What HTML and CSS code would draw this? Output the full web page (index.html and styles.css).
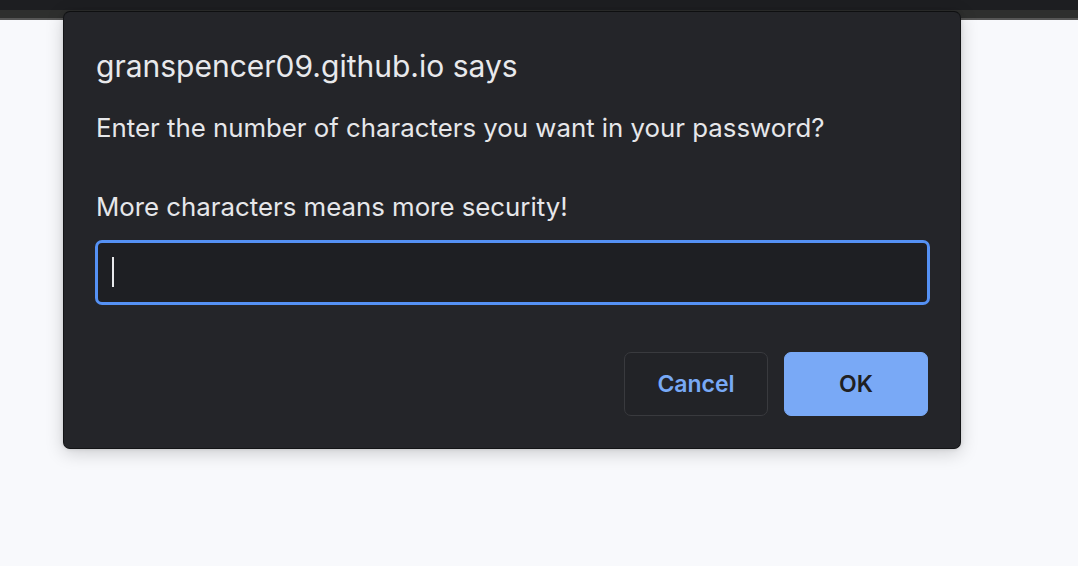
FILE: index.html
```html
<!DOCTYPE html>
<html>
<head>
<meta charset="utf-8">
<link rel="stylesheet" href="styles.css">
</head>
<body>
<div class="topbar"></div>
<div class="strip"></div>
<div class="page">
  <div class="dialog">
    <div class="title">granspencer09.github.io says</div>
    <div class="message">Enter the number of characters you want in your password?</div>
    <div class="message second">More characters means more security!</div>
    <div class="input"><span class="caret"></span></div>
    <div class="actions">
      <button class="btn cancel">Cancel</button>
      <button class="btn ok">OK</button>
    </div>
  </div>
</div>
</body>
</html>
```
FILE: styles.css
```css
* { box-sizing: border-box; }
html, body { margin: 0; padding: 0; }
body {
  width: 1078px;
  height: 566px;
  overflow: hidden;
  background: #f8f9fc;
  font-family: Inter, "Noto Sans", sans-serif;
  position: relative;
}
.topbar { height: 10px; background: #1d1e21; }
.strip { height: 10px; background: #2e2f2e; border-bottom: 2px solid #565656; }
.page { height: 546px; }
.dialog {
  position: absolute;
  left: 63px;
  top: 11px;
  width: 898px;
  height: 438px;
  background: #242529;
  border: 1px solid #131416;
  border-top-color: #0e0f10;
  border-radius: 7px;
  box-shadow: 0 4px 18px rgba(0,0,0,0.18), 0 0 4px rgba(0,0,0,0.12);
  padding: 36px 32px 0 32px;
  color: #e8e9ec;
}
.title {
  font-size: 30px;
  line-height: 36px;
  color: #e8e9ec;
}
.message {
  margin-top: 29px;
  font-size: 25.8px;
  line-height: 30px;
  color: #e6e7ea;
}
.message.second { margin-top: 49px; }
.input {
  margin-top: 18px;
  margin-left: -1px;
  width: 835px;
  height: 65px;
  border: 3px solid #5591f4;
  border-radius: 7px;
  background: #1e1f23;
  padding: 14px 0 0 14px;
}
.caret {
  display: block;
  width: 2px;
  height: 30px;
  background: #e8e9ec;
}
.actions {
  margin-top: 47px;
  display: flex;
  justify-content: flex-end;
  gap: 16px;
}
.btn {
  width: 144px;
  height: 64px;
  border-radius: 7px;
  font-family: Inter, "Liberation Sans", sans-serif;
  font-weight: 600;
  font-size: 23px;
  cursor: default;
}
.cancel {
  background: #222327;
  border: 1px solid #393a3e;
  color: #78a9f6;
}
.ok {
  background: #79a9f6;
  border: 1px solid #79a9f6;
  color: #1f2023;
}
```
